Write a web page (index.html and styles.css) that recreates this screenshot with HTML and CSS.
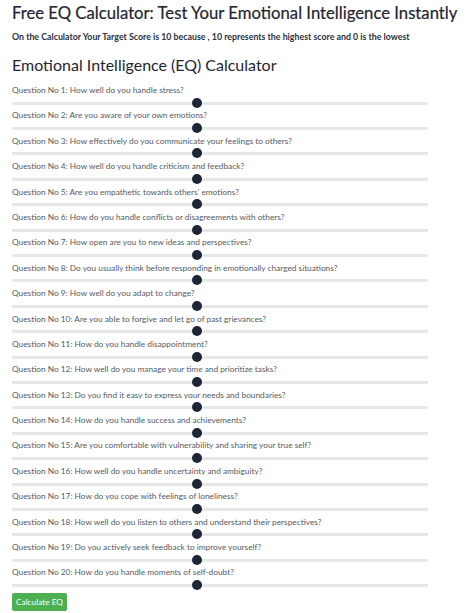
FILE: index.html
```html
<!DOCTYPE html>
<html lang="en">
<head>
    <meta charset="UTF-8">
    <meta name="viewport" content="width=device-width, initial-scale=1.0">
    <title>Free EQ Calculator</title>
    <link rel="stylesheet" href="styles.css">
</head>
<body>
    <div class="page">
        <h1 class="title">Free EQ Calculator: Test Your Emotional Intelligence Instantly</h1>
        <p class="note">On the Calculator Your Target Score is 10 because , 10 represents the highest score and 0 is the lowest</p>
        <h2 class="calc-title">Emotional Intelligence (EQ) Calculator</h2>
        <form class="quiz" id="quiz">
            <label class="question">Question No 1: How well do you handle stress?</label>
            <input class="slider" type="range" min="1" max="10" value="5">
            <label class="question">Question No 2: Are you aware of your own emotions?</label>
            <input class="slider" type="range" min="1" max="10" value="5">
            <label class="question">Question No 3: How effectively do you communicate your feelings to others?</label>
            <input class="slider" type="range" min="1" max="10" value="5">
            <label class="question">Question No 4: How well do you handle criticism and feedback?</label>
            <input class="slider" type="range" min="1" max="10" value="5">
            <label class="question">Question No 5: Are you empathetic towards others' emotions?</label>
            <input class="slider" type="range" min="1" max="10" value="5">
            <label class="question">Question No 6: How do you handle conflicts or disagreements with others?</label>
            <input class="slider" type="range" min="1" max="10" value="5">
            <label class="question">Question No 7: How open are you to new ideas and perspectives?</label>
            <input class="slider" type="range" min="1" max="10" value="5">
            <label class="question">Question No 8: Do you usually think before responding in emotionally charged situations?</label>
            <input class="slider" type="range" min="1" max="10" value="5">
            <label class="question">Question No 9: How well do you adapt to change?</label>
            <input class="slider" type="range" min="1" max="10" value="5">
            <label class="question">Question No 10: Are you able to forgive and let go of past grievances?</label>
            <input class="slider" type="range" min="1" max="10" value="5">
            <label class="question">Question No 11: How do you handle disappointment?</label>
            <input class="slider" type="range" min="1" max="10" value="5">
            <label class="question">Question No 12: How well do you manage your time and prioritize tasks?</label>
            <input class="slider" type="range" min="1" max="10" value="5">
            <label class="question">Question No 13: Do you find it easy to express your needs and boundaries?</label>
            <input class="slider" type="range" min="1" max="10" value="5">
            <label class="question">Question No 14: How do you handle success and achievements?</label>
            <input class="slider" type="range" min="1" max="10" value="5">
            <label class="question">Question No 15: Are you comfortable with vulnerability and sharing your true self?</label>
            <input class="slider" type="range" min="1" max="10" value="5">
            <label class="question">Question No 16: How well do you handle uncertainty and ambiguity?</label>
            <input class="slider" type="range" min="1" max="10" value="5">
            <label class="question">Question No 17: How do you cope with feelings of loneliness?</label>
            <input class="slider" type="range" min="1" max="10" value="5">
            <label class="question">Question No 18: How well do you listen to others and understand their perspectives?</label>
            <input class="slider" type="range" min="1" max="10" value="5">
            <label class="question">Question No 19: Do you actively seek feedback to improve yourself?</label>
            <input class="slider" type="range" min="1" max="10" value="5">
            <label class="question">Question No 20: How do you handle moments of self-doubt?</label>
            <input class="slider" type="range" min="1" max="10" value="5">
            <button class="calc-btn" type="button">Calculate EQ</button>
        </form>
    </div>
</body>
</html>
```

FILE: styles.css
```css
body {
    font-family: Lato, "Noto Sans", sans-serif;
    background-color: #ffffff;
    color: #1f2633;
    margin: 0;
    padding: 0;
}
.page {
    padding: 2px 12px 0;
}
.title {
    font-size: 16.7px;
    font-weight: 400;
    margin: 0;
    line-height: 22px;
    white-space: nowrap;
    -webkit-text-stroke: 0.2px #1f2633;
}
.note {
    font-size: 8.8px;
    font-weight: 700;
    color: #2a3140;
    margin: 7px 0 0;
    line-height: 12px;
    white-space: nowrap;
}
.calc-title {
    font-size: 16px;
    font-weight: 400;
    margin: 11px 0 0;
    line-height: 22px;
}
.quiz {
    display: flex;
    flex-direction: column;
    align-items: flex-start;
    margin-top: 8px;
}
.question {
    font-size: 8.3px;
    color: #555b63;
    line-height: 12px;
    height: 12px;
}
.slider {
    -webkit-appearance: none;
    appearance: none;
    width: 416px;
    height: 13.4px;
    margin: 0;
    background: transparent;
}
.slider::-webkit-slider-runnable-track {
    height: 2px;
    background: #e6e6e6;
    border-radius: 1px;
    box-shadow: 0 1px 1px rgba(0, 0, 0, 0.1);
}
.slider::-webkit-slider-thumb {
    -webkit-appearance: none;
    width: 10px;
    height: 10px;
    border-radius: 50%;
    background: #1d2636;
    margin-top: -4px;
}
.calc-btn {
    margin-top: 1px;
    background-color: #4caf50;
    color: white;
    font-family: Lato, "Noto Sans", sans-serif;
    font-size: 8.3px;
    padding: 0 4px;
    height: 18px;
    border: none;
    border-radius: 2px;
    cursor: pointer;
}
```
